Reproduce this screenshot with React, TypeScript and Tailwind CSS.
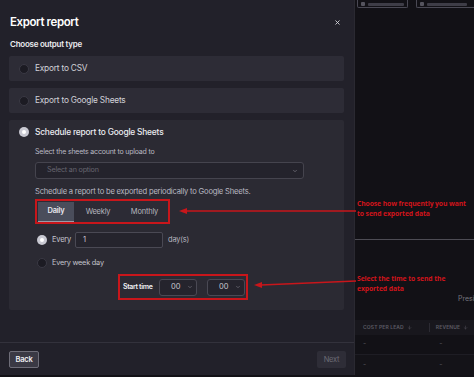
import { X, ChevronDown, ArrowDown } from "lucide-react";

const font = { fontFamily: "Inter, 'Liberation Sans', sans-serif" };

function Radio({ checked }: { checked?: boolean }) {
  return checked ? (
    <span className="flex h-[10px] w-[10px] shrink-0 items-center justify-center rounded-full bg-[#c9c9d2]">
      <span className="h-[4px] w-[4px] rounded-full bg-white" />
    </span>
  ) : (
    <span className="block h-[10px] w-[10px] shrink-0 rounded-full border border-[#3a3944] bg-[#1c1b23]" />
  );
}

function TimeSelect() {
  return (
    <div className="flex h-[17px] w-[38px] items-center justify-between rounded-[3px] border border-[#4a4954] bg-[#25242d] pl-[11px] pr-[3px] text-[7.5px] text-[#c8c8d0]">
      <span>00</span>
      <ChevronDown className="h-[6px] w-[6px] text-[#8c8b95]" strokeWidth={2} />
    </div>
  );
}

export default function App() {
  return (
    <div className="relative flex h-[377px] w-[474px] overflow-hidden bg-[#121116]" style={font}>
      {/* modal */}
      <div className="relative flex h-[375px] w-[355px] shrink-0 flex-col border-r border-[#2a2931] bg-[#22212a]">
        <div className="flex items-center justify-between pl-[10px] pr-[13px] pt-[12px]">
          <h1 className="text-[11.5px] font-semibold leading-[20px] tracking-[-0.4px] text-white">Export report</h1>
          <X className="h-[7px] w-[7px] text-[#d8d8de]" strokeWidth={3} />
        </div>
        <p className="mt-[5px] pl-[10px] text-[8px] font-semibold leading-[14px] tracking-[-0.25px] text-[#ececf0]">
          Choose output type
        </p>

        <div className="mt-[5px] flex flex-col gap-[7px] pl-[9px] pr-[10px]">
          <div className="flex h-[25px] items-center gap-[6px] rounded-[2px] bg-[#2d2c36] pl-[10px]">
            <Radio />
            <span className="text-[8.3px] tracking-[-0.2px] text-[#d2d2d9]">Export to CSV</span>
          </div>
          <div className="flex h-[25px] items-center gap-[6px] rounded-[2px] bg-[#2d2c36] pl-[10px]">
            <Radio />
            <span className="text-[8.3px] tracking-[-0.2px] text-[#d2d2d9]">Export to Google Sheets</span>
          </div>

          <div className="flex h-[190px] flex-col rounded-[2px] bg-[#2b2a33] pl-[10px] pt-[7px]">
            <div className="flex h-[10px] items-center gap-[6px]">
              <Radio checked />
              <span className="text-[8.4px] font-medium tracking-[-0.2px] text-[#ececf1]">
                Schedule report to Google Sheets
              </span>
            </div>
            <div className="pl-[16px]">
              <p className="mt-[9px] text-[7px] leading-[12px] tracking-[-0.2px] text-[#b9b9c2]">
                Select the sheets account to upload to
              </p>
              <div className="mt-[4px] flex h-[17px] w-[269px] items-center justify-between rounded-[3px] border border-[#45444e] bg-[#24232c] pl-[11px] pr-[5px]">
                <span className="text-[7.2px] tracking-[-0.2px] text-[#676670]">Select an option</span>
                <ChevronDown className="h-[6px] w-[6px] text-[#9a99a3]" strokeWidth={2} />
              </div>
              <p className="mt-[7px] text-[7.6px] leading-[12px] tracking-[-0.2px] text-[#b9b9c2]">
                Schedule a report to be exported periodically to Google Sheets.
              </p>

              {/* tabs */}
              <div className="mt-[1px] flex h-[25px] w-[135px] items-center border-2 border-[#c8161b] bg-[#2c2b35] px-px">
                <div className="flex h-[20px] w-[36px] items-center justify-center border-b border-[#9a9ca8] bg-[#4a4d5b] text-[7.5px] font-semibold tracking-[-0.2px] text-[#e8e8ee]">
                  Daily
                </div>
                <div className="flex h-[20px] w-[48px] items-center justify-center text-[7.5px] tracking-[-0.2px] text-[#b5b5be]">
                  Weekly
                </div>
                <div className="flex h-[20px] flex-1 items-center justify-center text-[7.5px] tracking-[-0.2px] text-[#b5b5be]">
                  Monthly
                </div>
              </div>

              <div className="mt-[8px] flex h-[16px] items-center">
                <div className="flex w-[40px] items-center pl-[2px]">
                  <Radio checked />
                  <span className="ml-[5px] text-[7.5px] tracking-[-0.2px] text-[#c4c4cc]">Every</span>
                </div>
                <div className="flex h-[16px] w-[88px] items-center rounded-[2px] border border-[#4a4954] bg-[#25242d] pl-[7px] text-[7.5px] text-[#c8c8d0]">
                  1
                </div>
                <span className="ml-[5px] text-[7.5px] tracking-[-0.2px] text-[#b5b5be]">day(s)</span>
              </div>
              <div className="mt-[8px] flex h-[14px] items-center pl-[2px]">
                <Radio />
                <span className="ml-[5px] text-[7.3px] tracking-[-0.2px] text-[#c4c4cc]">Every week day</span>
              </div>

              <div className="ml-[83px] mt-[4px] flex h-[26px] w-[130px] items-center border-2 border-[#c8161b] pl-[3px]">
                <span className="w-[36px] whitespace-nowrap text-[7px] font-semibold tracking-[-0.35px] text-[#eeeef2]">
                  Start time
                </span>
                <TimeSelect />
                <div className="ml-[10px]">
                  <TimeSelect />
                </div>
              </div>
            </div>
          </div>
        </div>

        <div className="mt-auto border-t border-[#33323c] pb-[7px] pt-[8px]">
          <div className="flex items-center justify-between pl-[9px] pr-[8px]">
            <button className="flex h-[17px] w-[30px] items-center justify-center rounded-[2px] border border-[#6e6d78] bg-[#3a3944] text-[7.5px] font-semibold tracking-[-0.2px] text-[#eeeef2]">
              Back
            </button>
            <button className="flex h-[17px] w-[29px] items-center justify-center rounded-[2px] bg-[#2e2d37] text-[7.5px] tracking-[-0.2px] text-[#6c6b75]">
              Next
            </button>
          </div>
        </div>
      </div>

      {/* background page */}
      <div className="flex flex-1 flex-col">
        <div className="flex h-[8px] gap-[8px] pl-[2px]">
          <div className="flex h-[8px] w-[51px] items-end gap-[3px] rounded-b-[2px] border border-t-0 border-[#4a4954] px-[3px]">
            <span className="mb-[1px] h-[4px] w-[4px] rounded-[1px] bg-[#55545e]" />
            <span className="mb-[1px] h-[3px] w-[36px] rounded-[1px] bg-[#3e3d47]" />
          </div>
          <div className="flex h-[8px] flex-1 items-end gap-[3px] rounded-bl-[2px] border border-r-0 border-t-0 border-[#4a4954] px-[3px]">
            <span className="mb-[1px] h-[4px] w-[4px] rounded-[1px] bg-[#55545e]" />
            <span className="mb-[1px] h-[3px] w-[40px] rounded-[1px] bg-[#3e3d47]" />
          </div>
        </div>

        <div className="h-[191px]" />
        <div
          className="whitespace-nowrap pl-[2px] text-[6.8px] font-bold leading-[9.5px] tracking-[-0.1px] text-[#d0141b]"
          style={{ fontFamily: "'Open Sans', 'Liberation Sans', sans-serif" }}
        >
          Choose how frequently you want
          <br />
          to send exported data
        </div>
        <div className="mt-[21px] h-px bg-[#4d4c54]" />
        <div
          className="mt-[34px] whitespace-nowrap pl-[2px] text-[6.8px] font-bold leading-[9.5px] tracking-[-0.1px] text-[#d0141b]"
          style={{ fontFamily: "'Open Sans', 'Liberation Sans', sans-serif" }}
        >
          Select the time to send the
          <br />
          exported data
        </div>
        <div className="mt-px h-[10px] overflow-hidden whitespace-nowrap pl-[103px] text-[7px] leading-[10px] text-[#77767f]">
          Presi
        </div>

        <div className="mt-[16px] flex h-[15px] items-center whitespace-nowrap bg-[#18171d] text-[5px] font-semibold tracking-wide text-[#5c5b64]">
          <span className="ml-[8px] flex items-center gap-[3px]">
            COST PER LEAD <ArrowDown className="h-[5px] w-[5px]" />
          </span>
          <span className="ml-[17px] h-[9px] w-px bg-[#2c2b33]" />
          <span className="ml-[6px] flex items-center gap-[3px]">
            REVENUE <ArrowDown className="h-[5px] w-[5px]" />
          </span>
        </div>
        <div className="flex h-[20px] items-center border-b border-[#1e1d24] text-[7px] text-[#55545c]">
          <span className="ml-[8px]">-</span>
          <span className="ml-[73px]">-</span>
        </div>
        <div className="flex h-[20px] items-center bg-[#141318] text-[7px] text-[#55545c]">
          <span className="ml-[8px]">-</span>
          <span className="ml-[73px]">-</span>
        </div>
      </div>

      {/* annotation arrows over content */}
      <svg className="pointer-events-none absolute left-0 top-0" width="474" height="377">
        <line x1="186" y1="211" x2="356" y2="211" stroke="#c8161b" strokeWidth="1.6" />
        <polygon points="179,211 187,208 187,214" fill="#c8161b" />
        <line x1="261" y1="285" x2="356" y2="281" stroke="#c8161b" strokeWidth="1.6" />
        <polygon points="254,285 262,282 262,288" fill="#c8161b" />
      </svg>
    </div>
  );
}
